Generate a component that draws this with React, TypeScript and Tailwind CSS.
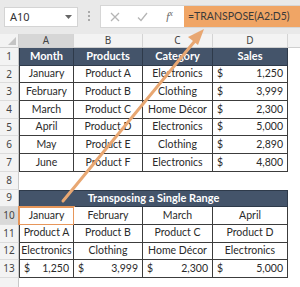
import React from "react";

const font = { fontFamily: "Lato, 'Open Sans', sans-serif" };

type Cell = { t?: string; dollar?: string; cls?: string };

const widths = ["w-[55px]", "w-[69px]", "w-[70px]", "w-[75px]"];

function RowNum({ n, sel }: { n: string; sel?: boolean }) {
  return (
    <div
      className={`w-[19px] h-full flex items-center justify-center text-[10px] text-[#444] border-b border-[#dcdcdc] border-r border-r-[#c8c8c8] ${sel ? "bg-[#d9d9d9]" : "bg-[#f3f3f3]"}`}
      style={{ fontFamily: "'Noto Sans', sans-serif" }}
    >
      {n}
    </div>
  );
}

function DataRow({ n, cells, head, sel }: { n: string; cells: Cell[]; head?: boolean; sel?: boolean }) {
  return (
    <div className="flex h-[17.7px]">
      <RowNum n={n} sel={sel} />
      {cells.map((c, i) => (
        <div
          key={i}
          className={`${widths[i]} h-full flex items-center border-b border-r ${i === 0 ? "border-l" : ""} ${
            head ? "bg-[#44546a] text-white font-bold text-[11px] border-[#2e3a4a] justify-center" : "bg-white text-[#2a2a2a] text-[10.5px] border-[#3c3c3c] justify-center"
          } ${c.cls ?? ""}`}
          style={font}
        >
          {c.dollar !== undefined ? (
            <div className="flex w-full justify-between px-[4px]">
              <span>$</span>
              <span>{c.dollar}</span>
            </div>
          ) : (
            c.t
          )}
        </div>
      ))}
      <div className="flex-1 bg-white" />
    </div>
  );
}

export default function App() {
  const data = [
    ["January", "Product A", "Electronics", "1,250"],
    ["February", "Product B", "Clothing", "3,999"],
    ["March", "Product C", "Home Décor", "2,300"],
    ["April", "Product D", "Electronics", "5,000"],
    ["May", "Product E", "Clothing", "2,890"],
    ["June", "Product F", "Electronics", "4,800"],
  ];
  return (
    <div className="relative w-[300px] h-[287px] bg-white overflow-hidden">
      {/* top bar */}
      <div className="h-[34px] bg-[#e9e9e9] flex items-start pt-[5px]">
        <div className="ml-[4px] mt-[2px] w-[74px] h-[20px] bg-white border border-[#d4d4d4] flex items-center justify-between pl-[5px] pr-[5px]">
          <span className="text-[11px] text-[#333]" style={{ fontFamily: "'Noto Sans', sans-serif" }}>A10</span>
          <svg width="7" height="4" viewBox="0 0 7 4"><path d="M0 0 H7 L3.5 4 Z" fill="#666" /></svg>
        </div>
        <div className="w-[22px] h-[22px] flex flex-col items-center justify-center gap-[2px]">
          <div className="w-[2px] h-[2px] bg-[#aaa]" />
          <div className="w-[2px] h-[2px] bg-[#aaa]" />
          <div className="w-[2px] h-[2px] bg-[#aaa]" />
        </div>
        <div className="flex-1 h-[23px] bg-white border border-[#d6d6d6] border-r-0 flex items-center">
          <div className="w-[28px] flex justify-center">
            <svg width="10" height="10" viewBox="0 0 10 10"><path d="M1 1 L9 9 M9 1 L1 9" stroke="#b5b5b5" strokeWidth="1.3" /></svg>
          </div>
          <div className="w-[26px] flex justify-center">
            <svg width="11" height="10" viewBox="0 0 11 10"><path d="M1 5.5 L4 8.5 L10 1" stroke="#b5b5b5" strokeWidth="1.3" fill="none" /></svg>
          </div>
          <div className="w-[29px] flex justify-center text-[11px] italic text-[#666]" style={{ fontFamily: "'Liberation Serif', serif" }}>
            f<span className="text-[8px]">x</span>
          </div>
          <div className="flex-1 h-full bg-[#f0a565] flex items-center pl-[4px] text-[10.5px] text-[#3a3a3a]" style={font}>
            =TRANSPOSE(A2:D5)
          </div>
        </div>
      </div>
      {/* column header */}
      <div className="flex h-[14px] bg-[#f3f3f3] border-b border-[#cfcfcf]" style={{ fontFamily: "'Noto Sans', sans-serif" }}>
        <div className="w-[19px] h-full relative border-r border-[#cfcfcf]">
          <svg className="absolute right-[2px] bottom-[2px]" width="8" height="8" viewBox="0 0 8 8"><path d="M8 0 V8 H0 Z" fill="#c4c4c4" /></svg>
        </div>
        {["A", "B", "C", "D"].map((l, i) => (
          <div key={l} className={`${widths[i]} h-full flex items-center justify-center text-[10px] text-[#444] border-r border-[#d4d4d4] ${i === 0 ? "bg-[#d6d6d6]" : ""}`}>
            {l}
          </div>
        ))}
        <div className="flex-1" />
      </div>
      <DataRow n="1" head cells={[{ t: "Month" }, { t: "Products" }, { t: "Category" }, { t: "Sales" }]} />
      {data.map((r, i) => (
        <DataRow key={i} n={String(i + 2)} cells={[{ t: r[0] }, { t: r[1] }, { t: r[2] }, { dollar: r[3] }]} />
      ))}
      <div className="flex h-[17.7px]">
        <RowNum n="8" />
        <div className="flex-1 bg-white" />
      </div>
      <div className="flex h-[17.7px]">
        <RowNum n="9" />
        <div className="w-[269px] h-full bg-[#44546a] border border-[#2e3a4a] flex items-center justify-center text-[11px] font-bold text-white" style={font}>
          Transposing a Single Range
        </div>
        <div className="flex-1 bg-white" />
      </div>
      <DataRow n="10" sel cells={[{ t: "January", cls: "outline-2 outline-[#e6965a] -outline-offset-1" }, { t: "February" }, { t: "March" }, { t: "April" }]} />
      <DataRow n="11" cells={[{ t: "Product A" }, { t: "Product B" }, { t: "Product C" }, { t: "Product D" }]} />
      <DataRow n="12" cells={[{ t: "Electronics" }, { t: "Clothing" }, { t: "Home Décor" }, { t: "Electronics" }]} />
      <DataRow n="13" cells={[{ dollar: "1,250" }, { dollar: "3,999" }, { dollar: "2,300" }, { dollar: "5,000" }]} />
      <div className="flex h-[10px]">
        <div className="w-[19px] h-full bg-[#f3f3f3] border-r border-[#c8c8c8]" />
        <div className="flex-1" />
      </div>
      {/* arrow overlay */}
      <svg className="absolute left-0 top-0 pointer-events-none" width="300" height="287" viewBox="0 0 300 287">
        <line x1="63" y1="201" x2="199" y2="36" stroke="#e8a772" strokeWidth="3" strokeLinecap="round" />
        <path d="M204 29 L188 37 L198 45 Z" fill="#e8a772" />
      </svg>
    </div>
  );
}
